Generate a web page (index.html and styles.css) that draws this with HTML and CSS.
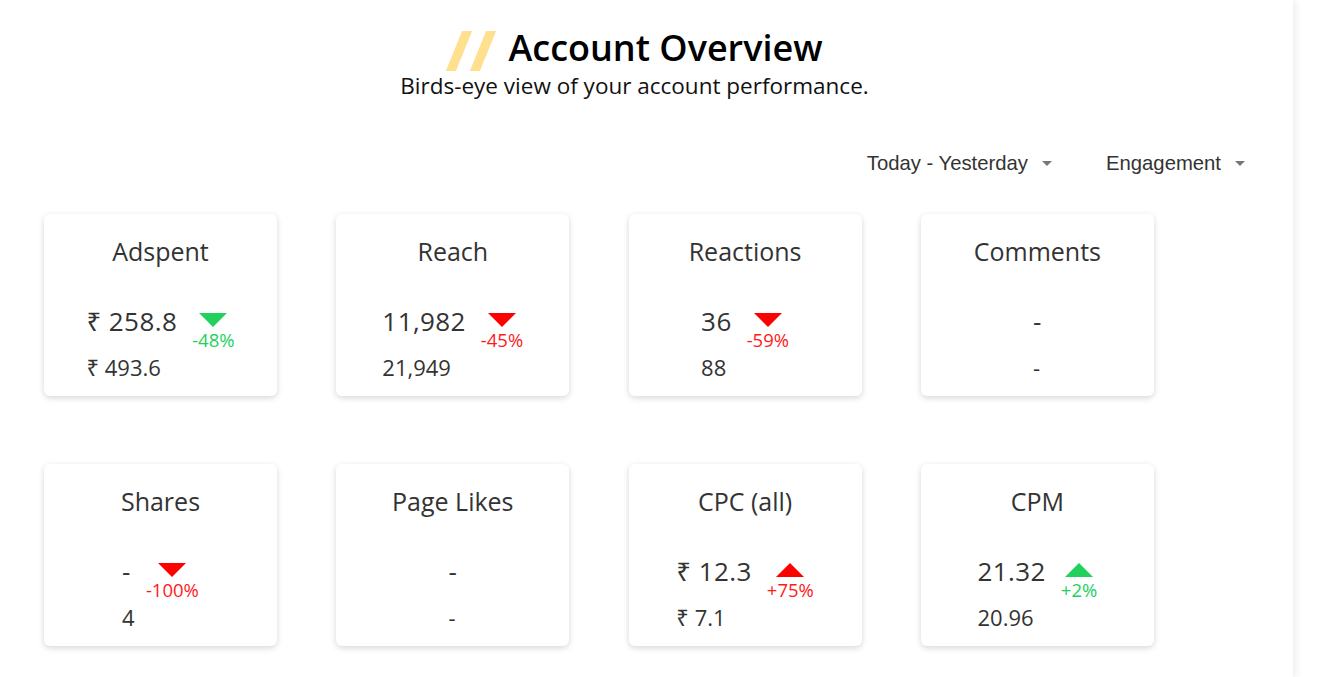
FILE: index.html
```html
<!DOCTYPE html>
<html lang="en">
<head>
<meta charset="utf-8">
<title>Account Overview</title>
<link rel="stylesheet" href="styles.css">
</head>
<body>
<main class="page">
  <header class="header">
    <div class="title-row">
      <span class="slashes"><span class="bar"></span><span class="bar"></span></span>
      <h1 class="title">Account Overview</h1>
    </div>
    <p class="subtitle">Birds-eye view of your account performance.</p>
  </header>

  <div class="filters">
    <div class="select"><span>Today - Yesterday</span><span class="caret"></span></div>
    <div class="select"><span>Engagement</span><span class="caret"></span></div>
  </div>

  <section class="grid">
    <div class="card">
      <div class="card-title">Adspent</div>
      <div class="block">
        <div class="value-row">
          <span class="value">₹ 258.8</span>
          <span class="delta good"><span class="tri down"></span><span class="pct">-48%</span></span>
        </div>
        <div class="prev">₹ 493.6</div>
      </div>
    </div>
    <div class="card">
      <div class="card-title">Reach</div>
      <div class="block">
        <div class="value-row">
          <span class="value">11,982</span>
          <span class="delta bad"><span class="tri down"></span><span class="pct">-45%</span></span>
        </div>
        <div class="prev">21,949</div>
      </div>
    </div>
    <div class="card">
      <div class="card-title">Reactions</div>
      <div class="block">
        <div class="value-row">
          <span class="value">36</span>
          <span class="delta bad"><span class="tri down"></span><span class="pct">-59%</span></span>
        </div>
        <div class="prev">88</div>
      </div>
    </div>
    <div class="card">
      <div class="card-title">Comments</div>
      <div class="block">
        <div class="value-row">
          <span class="value">-</span>
        </div>
        <div class="prev">-</div>
      </div>
    </div>

    <div class="card">
      <div class="card-title">Shares</div>
      <div class="block">
        <div class="value-row">
          <span class="value">-</span>
          <span class="delta bad"><span class="tri down"></span><span class="pct">-100%</span></span>
        </div>
        <div class="prev">4</div>
      </div>
    </div>
    <div class="card">
      <div class="card-title">Page Likes</div>
      <div class="block">
        <div class="value-row">
          <span class="value">-</span>
        </div>
        <div class="prev">-</div>
      </div>
    </div>
    <div class="card">
      <div class="card-title">CPC (all)</div>
      <div class="block">
        <div class="value-row">
          <span class="value">₹ 12.3</span>
          <span class="delta bad"><span class="tri up"></span><span class="pct">+75%</span></span>
        </div>
        <div class="prev">₹ 7.1</div>
      </div>
    </div>
    <div class="card">
      <div class="card-title">CPM</div>
      <div class="block">
        <div class="value-row">
          <span class="value">21.32</span>
          <span class="delta good"><span class="tri up"></span><span class="pct">+2%</span></span>
        </div>
        <div class="prev">20.96</div>
      </div>
    </div>
  </section>
</main>
</body>
</html>
```

FILE: styles.css
```css
* { box-sizing: border-box; }

html, body {
  margin: 0;
  padding: 0;
  background: #ffffff;
}

body {
  font-family: "Open Sans", "Noto Sans", sans-serif;
  color: #333333;
  overflow: hidden;
}

.page {
  width: 1293px;
  min-height: 677px;
  background: #ffffff;
  box-shadow: 3px 0 8px rgba(0, 0, 0, 0.07);
  padding-top: 26px;
}

.header {
  padding-right: 24px;
  display: flex;
  flex-direction: column;
  align-items: center;
}

.title-row {
  display: flex;
  align-items: center;
  height: 44px;
}

.slashes {
  display: flex;
  gap: 14px;
  margin-right: 20px;
  padding-left: 8px;
  margin-top: 6px;
}

.bar {
  display: block;
  width: 10px;
  height: 40px;
  background: #ffe08f;
  transform: skewX(-22deg);
}

.title {
  margin: 0;
  font-size: 36px;
  line-height: 44px;
  font-weight: 600;
  color: #000000;
}

.subtitle {
  margin: 2px 0 0;
  font-size: 22.5px;
  line-height: 28px;
  color: #111111;
}

.filters {
  display: flex;
  justify-content: flex-end;
  gap: 54px;
  padding-right: 48px;
  margin-top: 51px;
  font-family: "Liberation Sans", Arial, sans-serif;
  font-size: 20.3px;
  line-height: 24px;
  color: #333333;
}

.select {
  display: flex;
  align-items: center;
  gap: 14px;
}

.caret {
  width: 0;
  height: 0;
  border-left: 5px solid transparent;
  border-right: 5px solid transparent;
  border-top: 5px solid #777777;
  margin-top: 1px;
}

.grid {
  display: grid;
  grid-template-columns: repeat(4, 233px);
  column-gap: 59.3px;
  row-gap: 68px;
  padding-left: 44px;
  margin-top: 39px;
}

.card {
  height: 182px;
  background: #ffffff;
  border-radius: 6px;
  box-shadow: 0 2px 6px rgba(0, 0, 0, 0.16);
  padding-top: 21px;
  display: flex;
  flex-direction: column;
  align-items: center;
}

.card-title {
  font-size: 25px;
  line-height: 32px;
  color: #333333;
}

.block {
  margin-top: 38px;
  display: flex;
  flex-direction: column;
  align-items: flex-start;
}

.value-row {
  display: flex;
  align-items: flex-start;
  height: 48px;
}

.value {
  font-size: 26px;
  line-height: 32px;
  letter-spacing: 0.4px;
  color: #333333;
}

.delta {
  display: flex;
  flex-direction: column;
  align-items: center;
  margin-left: 15px;
  padding-top: 8px;
}

.pct {
  font-size: 18.5px;
  line-height: 20px;
  margin-top: 3px;
}

.tri {
  width: 0;
  height: 0;
  border-left: 14.5px solid transparent;
  border-right: 14.5px solid transparent;
}

.tri.down { border-top: 14px solid currentColor; }
.tri.up { border-bottom: 14px solid currentColor; }

.good { color: #22d15c; }
.bad { color: #ff0000; }
.bad .pct { color: #ff1a1a; }

.prev {
  font-size: 22px;
  line-height: 28px;
  color: #333333;
}
```
